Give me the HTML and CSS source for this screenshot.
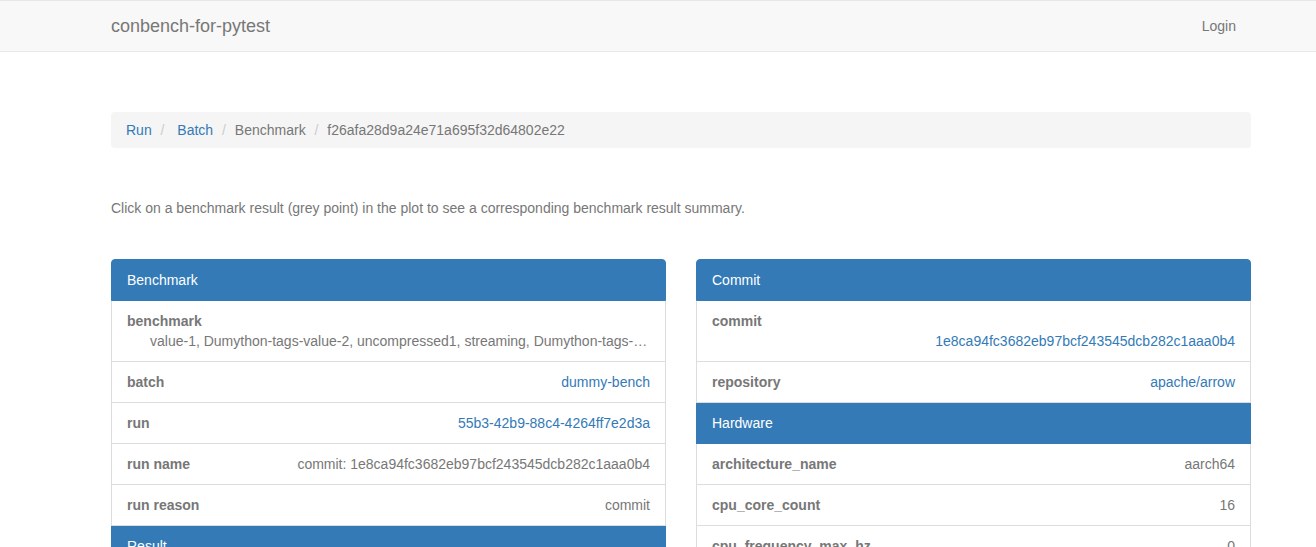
FILE: index.html
```html
<!DOCTYPE html>
<html>
<head>
<meta charset="utf-8">
<title>conbench-for-pytest</title>
<link rel="stylesheet" href="styles.css">
</head>
<body>
<nav class="navbar">
  <div class="container nav-inner">
    <a class="brand" href="#">conbench-for-pytest</a>
    <a class="nav-link" href="#">Login</a>
  </div>
</nav>
<div class="container">
  <ol class="breadcrumb">
    <li><a href="#">Run</a></li>
    <li class="wide"><a href="#">Batch</a></li>
    <li>Benchmark</li>
    <li>f26afa28d9a24e71a695f32d64802e22</li>
  </ol>
  <p class="hint">Click on a benchmark result (grey point) in the plot to see a corresponding benchmark result summary.</p>
  <div class="columns">
    <div class="panel">
      <div class="panel-heading first">Benchmark</div>
      <div class="item stacked">
        <b class="label">benchmark</b>
        <div class="ellipsis">value-1, Dumython-tags-value-2, uncompressed1, streaming, Dumython-tags-value-3, Dumython-tags-value-4</div>
      </div>
      <div class="item"><b class="label">batch</b><a href="#">dummy-bench</a></div>
      <div class="item"><b class="label">run</b><a href="#">55b3-42b9-88c4-4264ff7e2d3a</a></div>
      <div class="item"><b class="label">run name</b><span>commit: 1e8ca94fc3682eb97bcf243545dcb282c1aaa0b4</span></div>
      <div class="item"><b class="label">run reason</b><span>commit</span></div>
      <div class="panel-heading">Result</div>
      <div class="item"><b class="label">id</b><span></span></div>
    </div>
    <div class="panel">
      <div class="panel-heading first">Commit</div>
      <div class="item stacked">
        <b class="label">commit</b>
        <div class="right"><a href="#">1e8ca94fc3682eb97bcf243545dcb282c1aaa0b4</a></div>
      </div>
      <div class="item"><b class="label">repository</b><a href="#">apache/arrow</a></div>
      <div class="panel-heading">Hardware</div>
      <div class="item"><b class="label">architecture_name</b><span>aarch64</span></div>
      <div class="item"><b class="label">cpu_core_count</b><span>16</span></div>
      <div class="item"><b class="label">cpu_frequency_max_hz</b><span>0</span></div>
    </div>
  </div>
</div>
</body>
</html>
```

FILE: styles.css
```css
html, body {
  margin: 0;
  padding: 0;
}
body {
  font-family: "Liberation Sans", Arial, Helvetica, sans-serif;
  font-size: 14px;
  line-height: 20px;
  color: #777;
  background: #fff;
}
a {
  color: #337ab7;
  text-decoration: none;
}
.container {
  width: 1140px;
  margin-left: 111px;
}
.navbar {
  background: #f8f8f8;
  border-top: 1px solid #e7e7e7;
  border-bottom: 1px solid #e7e7e7;
  height: 50px;
}
.nav-inner {
  display: flex;
  justify-content: space-between;
  align-items: center;
  height: 50px;
}
.brand {
  font-size: 18px;
  line-height: 20px;
  color: #777;
}
.nav-link {
  color: #777;
  margin-right: 15px;
}
.breadcrumb {
  list-style: none;
  margin: 60px 0 0;
  padding: 8px 15px;
  background: #f5f5f5;
  border-radius: 4px;
}
.breadcrumb li {
  display: inline-block;
}
.breadcrumb li + li::before {
  content: "/\00a0";
  padding: 0 5px;
  color: #ccc;
}
.breadcrumb li.wide a {
  margin-left: 4px;
}
.hint {
  margin: 50px 0 41px;
}
.columns {
  display: grid;
  grid-template-columns: 555px 555px;
  column-gap: 30px;
}
.panel-heading {
  background: #337ab7;
  color: #fff;
  padding: 10px 15px;
  border: 1px solid #337ab7;
  border-top: 0;
}
.panel-heading.first {
  border-top: 1px solid #337ab7;
  border-radius: 4px 4px 0 0;
}
.item {
  display: flex;
  justify-content: space-between;
  padding: 10px 15px;
  border: 1px solid #ddd;
  border-top: 0;
}
.item.stacked {
  display: block;
}
.label {
  font-weight: bold;
  color: #777;
}
.ellipsis {
  padding-left: 23px;
  white-space: nowrap;
  overflow: hidden;
  text-overflow: ellipsis;
}
.right {
  text-align: right;
}
```
